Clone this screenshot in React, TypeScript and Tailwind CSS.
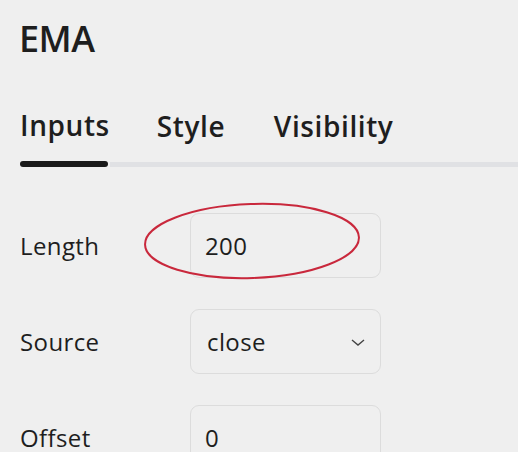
import React from "react";

export default function App() {
  return (
    <div
      className="w-[518px] h-[452px] overflow-hidden bg-[#efefef] text-[#1e1e1e]"
      style={{ fontFamily: '"Open Sans", "DejaVu Sans", sans-serif' }}
    >
      <div className="pl-[19px] pt-[17px] text-[36px] font-semibold leading-[44px] tracking-[-0.5px]">EMA</div>
      <div className="mt-[46px] flex items-end text-[28px] font-semibold leading-[36px] tracking-[0.6px]">
        <div className="flex flex-col pl-[20px]">
          <span className="pb-[18px]">Inputs</span>
          <div className="h-[6px] w-[88px] rounded-full bg-[#1a1a1a]" />
        </div>
        <div className="flex flex-1 flex-col">
          <div className="flex pb-[18px]">
            <span className="w-[164px] pl-[47px]">Style</span>
            <span>Visibility</span>
          </div>
          <div className="h-[5px] mb-[0.5px] bg-[#e0e1e4]" />
        </div>
      </div>
      <div className="mt-[46px] flex flex-col gap-[31px] pl-[20px] text-[24px] tracking-[0.4px]">
        <div className="relative flex items-center">
          <span className="w-[170px]">Length</span>
          <div className="flex h-[65px] w-[191px] items-center rounded-[9px] border border-[#dcdcdc] px-[14px]">200</div>
          <svg className="absolute left-[124px] top-[-16px]" width="230" height="90" viewBox="0 0 230 90">
            <ellipse cx="108" cy="44" rx="107" ry="37" fill="none" stroke="#c9283c" strokeWidth="2" transform="rotate(-2 108 44)" />
          </svg>
        </div>
        <div className="flex items-center">
          <span className="w-[170px]">Source</span>
          <div className="flex h-[65px] w-[191px] items-center justify-between rounded-[9px] border border-[#dcdcdc] pl-[16px] pr-[14px]">
            <span>close</span>
            <svg width="16" height="10" viewBox="0 0 16 10"><path d="M2 3l6 5 6-5" fill="none" stroke="#444" strokeWidth="1.4" /></svg>
          </div>
        </div>
        <div className="flex items-center">
          <span className="w-[170px]">Offset</span>
          <div className="flex h-[65px] w-[191px] items-center rounded-[9px] border border-[#dcdcdc] px-[14px]">0</div>
        </div>
      </div>
    </div>
  );
}
